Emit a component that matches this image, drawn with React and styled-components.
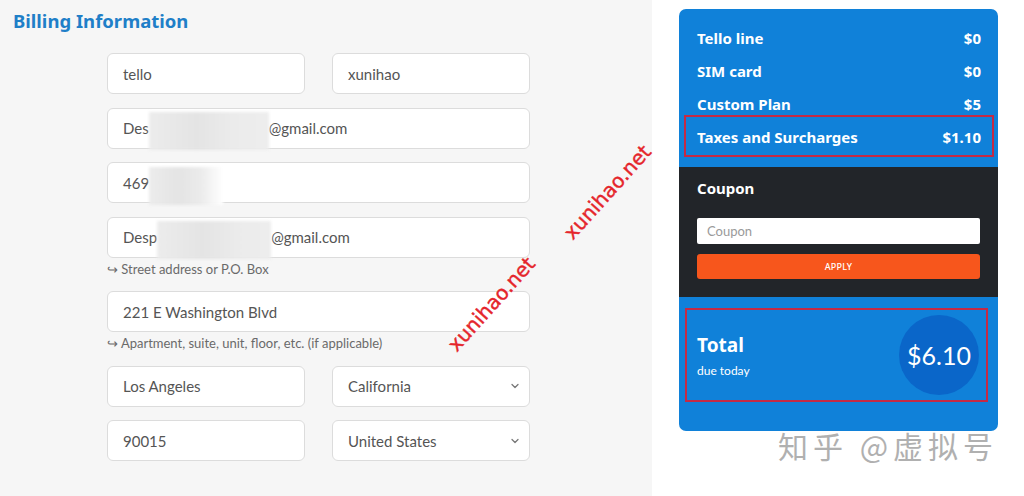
import React from 'react';
import styled, { createGlobalStyle } from 'styled-components';
import { ChevronDown } from 'lucide-react';

const GlobalStyle = createGlobalStyle`
  html, body {
    margin: 0;
    padding: 0;
    background: #ffffff;
  }
  body {
    font-family: "Lato", "Liberation Sans", sans-serif;
  }
  * { box-sizing: border-box; }
`;

const Page = styled.div`
  position: relative;
  display: flex;
  width: 1024px;
  height: 496px;
  overflow: hidden;
`;

const Left = styled.div`
  width: 652px;
  height: 496px;
  background: #f6f6f6;
  padding: 9px 0 0 13px;
`;

const Title = styled.h2`
  margin: 0;
  font-family: "Noto Sans", "Open Sans", sans-serif;
  font-weight: 700;
  font-size: 18.5px;
  line-height: 24px;
  color: #1f7fc8;
`;

const Form = styled.div`
  display: grid;
  grid-template-columns: 198px 198px;
  column-gap: 27px;
  row-gap: 13.5px;
  width: 423px;
  margin: 20px 0 0 94px;
`;

const Group = styled.div`
  grid-column: ${(p) => (p.$wide ? '1 / span 2' : 'auto')};
`;

const Field = styled.div`
  display: flex;
  align-items: center;
  height: 41px;
  padding: 0 8px 0 15px;
  background: #fff;
  border: 1px solid #dcdcdc;
  border-radius: 6px;
  font-size: 15px;
  color: #555;
  white-space: nowrap;
  justify-content: ${(p) => (p.$select ? 'space-between' : 'flex-start')};
`;

const Blur = styled.span`
  display: inline-block;
  width: ${(p) => p.$w}px;
  height: 38px;
  background: linear-gradient(90deg, #ececec, #e4e4e4 40%, #ebebeb 70%, ${(p) => (p.$fade ? '#fff' : '#ededed')});
  filter: blur(1.5px);
  margin-top: 6px;
`;

const Hint = styled.div`
  margin: 2px 0 0;
  font-size: 13px;
  line-height: 18px;
  color: #6a6a6a;
`;

const Right = styled.div`
  padding: 9px 0 0 27px;
`;

const Card = styled.div`
  width: 319px;
  height: 422px;
  border-radius: 7px;
  background: #1081d9;
  overflow: hidden;
  font-family: "Noto Sans", "Open Sans", sans-serif;
  color: #fff;
`;

const Lines = styled.div`
  padding: 12px 17px 14px 18px;
`;

const Line = styled.div`
  position: relative;
  display: flex;
  justify-content: space-between;
  align-items: center;
  height: 33px;
  font-size: 15px;
  font-weight: 700;

  ${(p) =>
    p.$marked &&
    `
    &::after {
      content: "";
      position: absolute;
      inset: -5px -13px -4px -13px;
      border: 2px solid #c42a45;
    }
  `}
`;

const Coupon = styled.div`
  background: #222529;
  padding: 11px 18px 18px;
`;

const CouponTitle = styled.div`
  font-size: 15px;
  font-weight: 700;
  line-height: 20px;
  margin-bottom: 20px;
`;

const CouponInput = styled.div`
  height: 26px;
  background: #fff;
  border-radius: 2px;
  padding: 0 10px;
  display: flex;
  align-items: center;
  font-family: "Lato", sans-serif;
  font-size: 13px;
  color: #9a9a9a;
`;

const ApplyButton = styled.div`
  margin-top: 10px;
  height: 25px;
  background: #f7561c;
  border-radius: 3px;
  display: flex;
  align-items: center;
  justify-content: center;
  font-size: 9px;
  font-weight: 500;
  color: #fff;
  letter-spacing: 0.2px;
`;

const TotalBox = styled.div`
  display: flex;
  align-items: center;
  justify-content: space-between;
  margin: 11px 10px 0 6px;
  height: 94px;
  padding: 0 7px 0 10px;
  border: 2px solid #c42a45;
`;

const TotalLabel = styled.div`
  font-size: 19px;
  font-weight: 700;
  line-height: 24px;
`;

const DueToday = styled.div`
  font-family: "Lato", sans-serif;
  font-size: 12px;
  margin-top: 6px;
`;

const Circle = styled.div`
  width: 80px;
  height: 80px;
  border-radius: 50%;
  background: #0a66c9;
  display: flex;
  align-items: center;
  justify-content: center;
  font-family: "Lato", sans-serif;
  font-size: 25px;
  color: #fff;
`;

const Watermark = styled.div`
  position: absolute;
  left: ${(p) => p.$x}px;
  top: ${(p) => p.$y}px;
  transform: rotate(-48deg);
  transform-origin: center;
  font-family: "DejaVu Sans", sans-serif;
  font-size: 20px;
  color: #e5252b;
  -webkit-text-stroke: 0.4px #e5252b;
  white-space: nowrap;
`;

const Zhihu = styled.div`
  position: absolute;
  left: 778px;
  top: 423px;
  font-family: "Noto Sans CJK SC", sans-serif;
  font-size: 30px;
  color: #b0b0b0;
  letter-spacing: 5px;
  text-shadow: 0 0 2px #fff, 1px 1px 0 #fff, -1px -1px 0 #fff;
`;

export default function App() {
  return (
    <Page>
      <GlobalStyle />
      <Left>
        <Title>Billing Information</Title>
        <Form>
          <Group><Field>tello</Field></Group>
          <Group><Field>xunihao</Field></Group>
          <Group $wide>
            <Field>Des<Blur $w={120} />@gmail.com</Field>
          </Group>
          <Group $wide>
            <Field>469<Blur $w={74} $fade /></Field>
          </Group>
          <Group $wide>
            <Field>Desp<Blur $w={114} />@gmail.com</Field>
            <Hint>↪ Street address or P.O. Box</Hint>
          </Group>
          <Group $wide>
            <Field>221 E Washington Blvd</Field>
            <Hint>↪ Apartment, suite, unit, floor, etc. (if applicable)</Hint>
          </Group>
          <Group><Field>Los Angeles</Field></Group>
          <Group>
            <Field $select>California<ChevronDown size={12} strokeWidth={2.5} color="#777" /></Field>
          </Group>
          <Group><Field>90015</Field></Group>
          <Group>
            <Field $select>United States<ChevronDown size={12} strokeWidth={2.5} color="#777" /></Field>
          </Group>
        </Form>
      </Left>

      <Right>
        <Card>
          <Lines>
            <Line><span>Tello line</span><span>$0</span></Line>
            <Line><span>SIM card</span><span>$0</span></Line>
            <Line><span>Custom Plan</span><span>$5</span></Line>
            <Line $marked><span>Taxes and Surcharges</span><span>$1.10</span></Line>
          </Lines>
          <Coupon>
            <CouponTitle>Coupon</CouponTitle>
            <CouponInput>Coupon</CouponInput>
            <ApplyButton>APPLY</ApplyButton>
          </Coupon>
          <TotalBox>
            <div>
              <TotalLabel>Total</TotalLabel>
              <DueToday>due today</DueToday>
            </div>
            <Circle>$6.10</Circle>
          </TotalBox>
        </Card>
      </Right>

      <Watermark $x={432} $y={292}>xunihao.net</Watermark>
      <Watermark $x={548} $y={180}>xunihao.net</Watermark>
      <Zhihu>知乎 @虚拟号</Zhihu>
    </Page>
  );
}
